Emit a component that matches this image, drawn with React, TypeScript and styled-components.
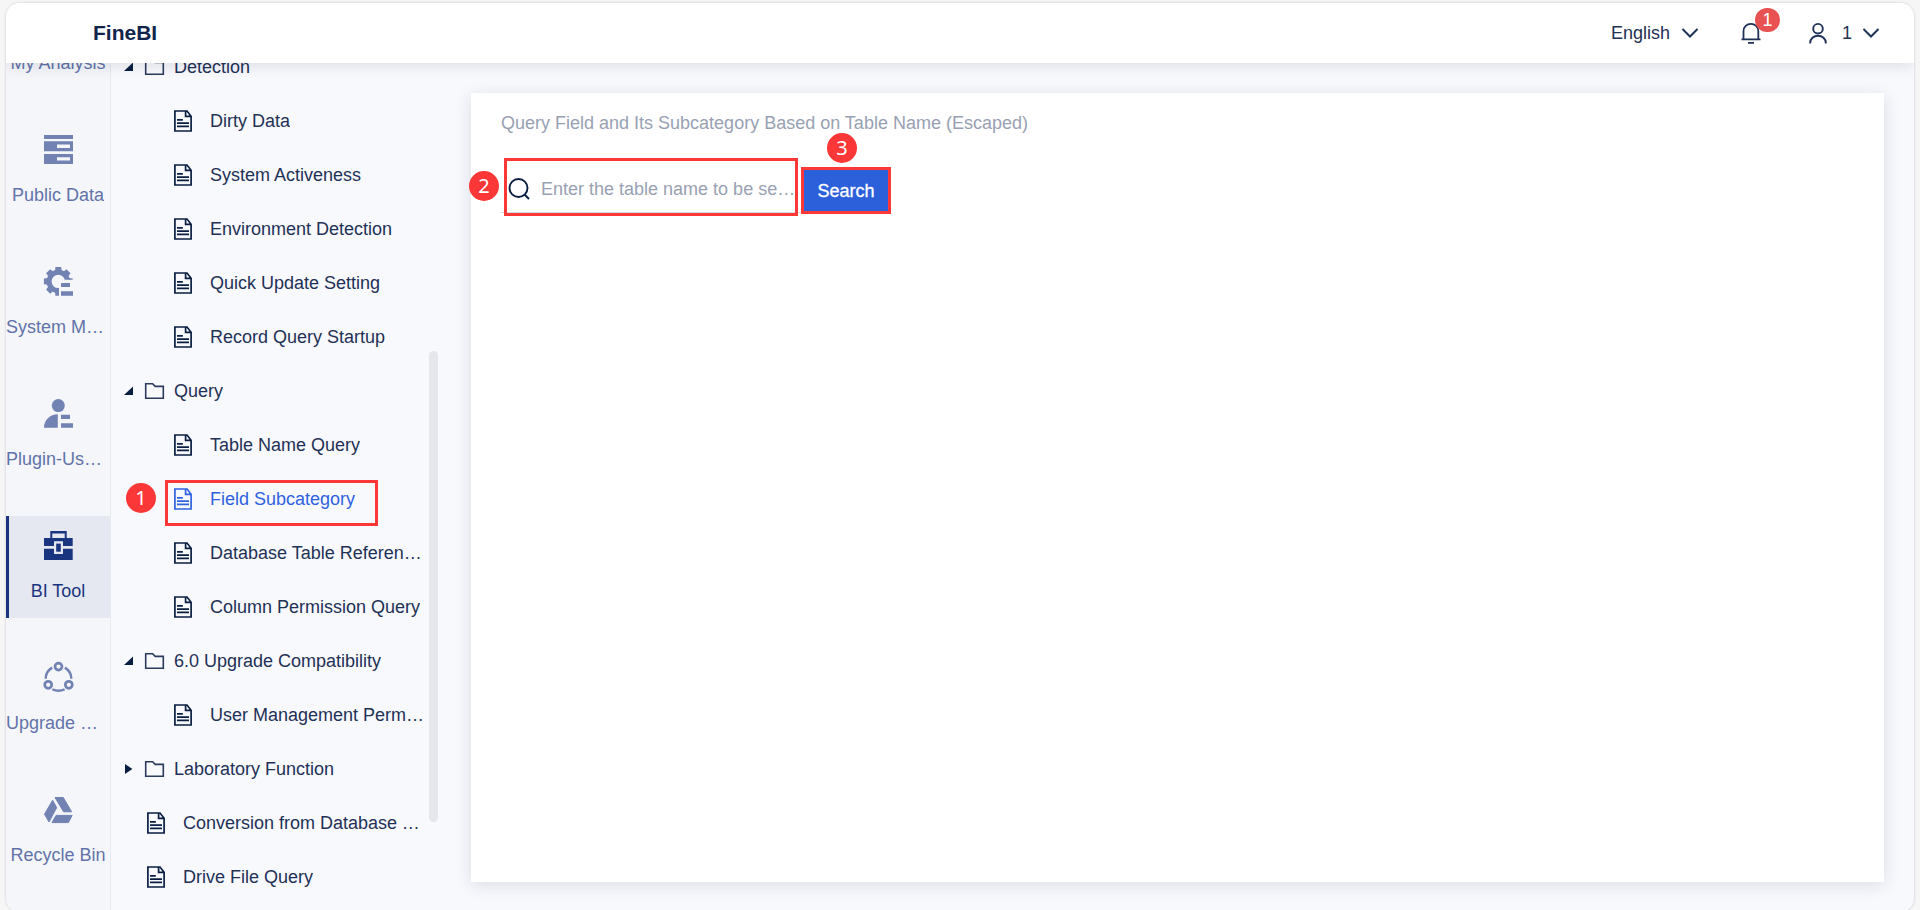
import React from "react";
import styled, { createGlobalStyle } from "styled-components";

const color = {
  page: "#f6f6f6",
  surface: "#ffffff",
  canvas: "#f8f9fd",
  nav: "#f5f6fa",
  navActive: "#e6e8f1",
  line: "#e8eaf1",
  ink: "#0a1e42",
  text: "#1f3156",
  navText: "#6273a9",
  navIcon: "#7283b3",
  brand: "#1a357f",
  link: "#2f62dd",
  button: "#2c60db",
  muted: "#98a1b3",
  mark: "#fc3737",
  badge: "#e85252",
};

const GlobalStyle = createGlobalStyle`
  *, *::before, *::after { box-sizing: border-box; }
  html, body { margin: 0; height: 100%; }
  body {
    background: ${color.page};
    color: ${color.text};
    font: 18px/24px "Liberation Sans", Arial, sans-serif;
    overflow: hidden;
  }
  button, input { font: inherit; color: inherit; }
  ul { list-style: none; margin: 0; padding: 0; }
  svg { display: block; flex: none; overflow: visible; }
`;

const Frame = styled.div`
  display: flex;
  flex-direction: column;
  height: calc(100vh - 1px);
  margin: 3px 6px 0;
  border-radius: 14px;
  background: ${color.canvas};
  box-shadow: 0 0 2px 1px #dfdfe1;
  overflow: hidden;
`;

const Header = styled.header`
  position: relative;
  z-index: 2;
  display: flex;
  flex: none;
  align-items: center;
  justify-content: space-between;
  height: 60px;
  padding: 0 35px 0 87px;
  background: ${color.surface};
  box-shadow: 0 3px 14px rgba(20, 30, 55, 0.12);
`;

const Brand = styled.h1`
  margin: 0;
  font-size: 21px;
  font-weight: bold;
  color: #10244c;
`;

const HeaderActions = styled.div`
  display: flex;
  align-items: center;
  gap: 43px;
`;

const PlainButton = styled.button<{ $gap?: number }>`
  position: relative;
  display: flex;
  align-items: center;
  gap: ${(p) => p.$gap ?? 0}px;
  padding: 0;
  border: 0;
  background: none;
  cursor: pointer;
`;

const AccountButton = styled(PlainButton)`
  padding-left: 5px;
`;

const AccountName = styled.span`
  display: flex;
  align-items: center;
  gap: 11px;
`;

const Badge = styled.span`
  position: absolute;
  top: -15px;
  left: 14px;
  width: 25px;
  height: 24px;
  border-radius: 12px;
  background: ${color.badge};
  color: #fff;
  line-height: 24px;
  text-align: center;
`;

const Body = styled.div`
  display: flex;
  flex: 1;
  min-height: 0;
`;

const Nav = styled.nav`
  flex: none;
  width: 105px;
  background: ${color.nav};
  border-right: 1px solid ${color.line};
  overflow: hidden;
`;

const NavList = styled.ul`
  display: flex;
  flex-direction: column;
  gap: 30px;
  margin-top: -75px;
`;

const NavLink = styled.a<{ $active?: boolean }>`
  display: flex;
  flex-direction: column;
  align-items: center;
  gap: 18px;
  height: 102px;
  padding-top: 15px;
  text-decoration: none;
  color: ${(p) => (p.$active ? color.brand : color.navText)};
  background: ${(p) => (p.$active ? color.navActive : "transparent")};
  box-shadow: ${(p) => (p.$active ? `inset 3px 0 0 ${color.brand}` : "none")};

  svg {
    color: ${(p) => (p.$active ? color.brand : color.navIcon)};
  }
`;

const Label = styled.span`
  max-width: 100%;
  overflow: hidden;
  text-overflow: ellipsis;
  white-space: nowrap;
`;

const Tree = styled.aside`
  position: relative;
  flex: none;
  width: 330px;
  overflow: hidden;
`;

const TreeList = styled.ul`
  margin-top: -23px;
  padding-right: 15px;
`;

const TreeItem = styled.li`
  position: relative;
`;

const GroupRow = styled.button`
  display: flex;
  align-items: center;
  width: 100%;
  height: 54px;
  padding: 0 0 0 13px;
  border: 0;
  background: none;
  text-align: left;
  cursor: pointer;
`;

const FolderSlot = styled.span`
  padding: 0 10px 0 11px;
`;

const LeafLink = styled.a<{ $nested?: boolean; $active?: boolean }>`
  display: flex;
  align-items: center;
  gap: 18px;
  height: 54px;
  padding-left: ${(p) => (p.$nested ? 63 : 36)}px;
  text-decoration: none;
  color: ${(p) => (p.$active ? color.link : color.text)};

  svg {
    color: ${(p) => (p.$active ? color.link : color.ink)};
  }
`;

const ScrollThumb = styled.div`
  position: absolute;
  top: 288px;
  right: 3px;
  width: 9px;
  height: 471px;
  border-radius: 5px;
  background: #e6e7ed;
`;

const Main = styled.main`
  display: flex;
  flex: 1;
  min-width: 0;
  padding: 30px;
`;

const Panel = styled.section`
  flex: 1;
  min-width: 0;
  padding: 18px 30px;
  background: ${color.surface};
  box-shadow: 0 3px 16px rgba(20, 30, 60, 0.13);
`;

const PanelTitle = styled.h2`
  margin: 0 0 30px;
  font-size: 18px;
  font-weight: normal;
  color: ${color.muted};
`;

const SearchForm = styled.form`
  display: flex;
  align-items: flex-start;
`;

const SearchField = styled.label`
  position: relative;
  display: flex;
  align-items: center;
  gap: 11px;
  width: 300px;
  height: 48px;
  padding-left: 7px;
  border-bottom: 1px solid #d5dae3;
  color: ${color.ink};
`;

const SearchInput = styled.input`
  flex: 1;
  min-width: 0;
  padding: 0;
  border: 0;
  outline: 0;
  background: none;
  text-overflow: ellipsis;

  &::placeholder {
    color: ${color.muted};
    opacity: 1;
  }
`;

const SearchButton = styled.button`
  position: relative;
  width: 90px;
  height: 47px;
  margin-top: 2px;
  padding: 0;
  border: 3px solid ${color.mark};
  background: ${color.button};
  color: #fff;
  -webkit-text-stroke: 0.3px #fff;
  cursor: pointer;
`;

const MarkBox = styled.span<{ $x: number; $y: number; $w: number; $h: number }>`
  position: absolute;
  left: ${(p) => p.$x}px;
  top: ${(p) => p.$y}px;
  width: ${(p) => p.$w}px;
  height: ${(p) => p.$h}px;
  border: 3px solid ${color.mark};
  pointer-events: none;
`;

const MarkDot = styled.span<{ $x: number; $y: number }>`
  position: absolute;
  left: ${(p) => p.$x}px;
  top: ${(p) => p.$y}px;
  width: 30px;
  height: 30px;
  border-radius: 50%;
  background: ${color.mark};
  color: #fff;
  font: 20px/30px "Noto Sans", "Open Sans", sans-serif;
  text-align: center;
  -webkit-text-stroke: 0;
  pointer-events: none;
`;

const Chevron = () => (
  <svg width="16" height="10" viewBox="0 0 16 10" fill="none" stroke={color.text} strokeWidth="2">
    <path d="M0.5 1 8 8.5 15.5 1" />
  </svg>
);

const Bell = () => (
  <svg width="20" height="21" viewBox="0 0 20 21" fill="none" stroke={color.text} strokeWidth="1.8">
    <path d="M0.5 16.4H19.5M2.5 16V8.2A7.4 7.4 0 0 1 17.3 8.2V16M7 19.8h6" />
  </svg>
);

const Person = () => (
  <svg width="18" height="21" viewBox="0 0 18 21" fill="none" stroke={color.text} strokeWidth="1.9">
    <circle cx="9" cy="5.7" r="4.8" />
    <path d="M1.2 20.5v-.8a7.8 7 0 0 1 15.6 0v.8" />
  </svg>
);

const Magnifier = () => (
  <svg width="22" height="22" viewBox="0 0 22 22" fill="none" stroke="currentColor" strokeWidth="1.9">
    <circle cx="10.5" cy="10" r="9" />
    <path d="M16.5 16.5 21 21" />
  </svg>
);

const DocIcon = () => (
  <svg width="18" height="22" viewBox="0 0 18 22" fill="none" stroke="currentColor" strokeWidth="1.7">
    <path d="M0.9 1H13L17.1 6.2V21H0.9ZM11.6 1V6.4H17.1" />
    <path d="M3 9.9H8.8M3 13.1H15M3 16.4H15" />
  </svg>
);

const FolderIcon = () => (
  <svg width="19" height="16" viewBox="0 0 19 16" fill="none" stroke="#2b3b5d" strokeWidth="1.6">
    <path d="M0.7 0.7H7.6L10.2 3.4H18.3V15.3H0.7Z" />
  </svg>
);

const Arrow = ({ open }: { open: boolean }) => (
  <svg width="10" height="10" viewBox="0 0 10 10" fill={color.ink}>
    <path d={open ? "M9 0.5V9H0Z" : "M1 0V10L8.4 5Z"} />
  </svg>
);

const NavSvg = ({ children }: { children: React.ReactNode }) => (
  <svg width="30" height="30" viewBox="0 0 30 30" fill="currentColor">
    {children}
  </svg>
);

const PublicDataIcon = () => (
  <NavSvg>
    <path
      fillRule="evenodd"
      d="M1 0H30V4H1ZM1 6.3H30V16.3H1ZM14 9.5V13H27V9.5ZM1 19H30V29H1ZM14 22.2V25.6H27V22.2Z"
    />
  </NavSvg>
);

const SystemIcon = () => (
  <NavSvg>
    <clipPath id="gear-cut">
      <path d="M0-1H30V12.8H22L20.5 14H16V30H0Z" />
    </clipPath>
    <g clipPath="url(#gear-cut)">
      <circle cx="15.3" cy="14.4" r="9.2" fill="none" stroke="currentColor" strokeWidth="5" />
      {[0, 45, 90, 135, 180, 225, 270, 315].map((a) => (
        <path key={a} d="M12 4 12.4 0H18.2L18.6 4Z" transform={`rotate(${a} 15.3 14.4)`} />
      ))}
    </g>
    <path d="M18 16H27V20H18ZM18 24.2H30V28.7H18Z" />
  </NavSvg>
);

const PluginIcon = () => (
  <NavSvg>
    <circle cx="15.3" cy="6.6" r="6.5" />
    <path d="M14.8 15.2V28.8H1C1 21 7 15.2 14.8 15.2ZM18 15.8H27V20H18ZM18 24.2H30V28.7H18Z" />
  </NavSvg>
);

const ToolIcon = () => (
  <NavSvg>
    <path d="M7.3 0H23.7V7H29.7V15H20V10.3H11V15H1V7H7.3ZM9.3 2.4V7H21.7V2.4Z" fillRule="evenodd" />
    <path d="M1 17.8H11V23H20V17.8H29.7V29H1Z" />
    <path d="M13.2 12.6H17.8V20.7H13.2Z" />
  </NavSvg>
);

const UpgradeIcon = () => (
  <NavSvg>
    <g fill="none" stroke="currentColor" strokeWidth="2.7">
      <circle cx="15.5" cy="3.6" r="3.5" />
      <circle cx="5.2" cy="21.8" r="3.5" />
      <circle cx="25.8" cy="21.8" r="3.5" />
      <path
        strokeWidth="2.4"
        d="M9.2 4.6A13 13 0 0 0 2.7 15.8M21.8 4.6A13 13 0 0 1 28.3 15.8M9.4 26.4Q15.5 29 21.6 26.4"
      />
    </g>
  </NavSvg>
);

const RecycleIcon = () => (
  <NavSvg>
    <g stroke="currentColor" strokeWidth="1" strokeLinejoin="round">
      <path d="M12 2.5H20.3L28.6 16.8H20.6Z" />
      <path d="M9.6 5.2 13.7 12.6 6 27 1.5 19.2Z" />
      <path d="M13 20.4H29.2L25.4 27.6H9Z" />
    </g>
  </NavSvg>
);

const navItems = [
  { label: "My Analysis", icon: <PublicDataIcon /> },
  { label: "Public Data", icon: <PublicDataIcon /> },
  { label: "System Management", icon: <SystemIcon /> },
  { label: "Plugin-Usage", icon: <PluginIcon /> },
  { label: "BI Tool", icon: <ToolIcon />, active: true },
  { label: "Upgrade Management", icon: <UpgradeIcon /> },
  { label: "Recycle Bin", icon: <RecycleIcon /> },
];

type Node = { label: string; open?: boolean; children?: string[] };

const tree: Node[] = [
  {
    label: "Detection",
    open: true,
    children: [
      "Dirty Data",
      "System Activeness",
      "Environment Detection",
      "Quick Update Setting",
      "Record Query Startup",
    ],
  },
  {
    label: "Query",
    open: true,
    children: [
      "Table Name Query",
      "Field Subcategory",
      "Database Table Reference Query",
      "Column Permission Query",
    ],
  },
  {
    label: "6.0 Upgrade Compatibility",
    open: true,
    children: ["User Management Permission"],
  },
  { label: "Laboratory Function", open: false, children: [] },
  { label: "Conversion from Database Table" },
  { label: "Drive File Query" },
];

const selected = "Field Subcategory";

const Leaf = ({ label, nested }: { label: string; nested?: boolean }) => (
  <TreeItem>
    <LeafLink href="#" $nested={nested} $active={label === selected}>
      <DocIcon />
      <Label>{label}</Label>
    </LeafLink>
    {label === selected && (
      <>
        <MarkBox $x={54} $y={8} $w={213} $h={46} />
        <MarkDot $x={15} $y={11}>1</MarkDot>
      </>
    )}
  </TreeItem>
);

const Group = ({ node }: { node: Node }) => (
  <TreeItem>
    <GroupRow type="button" aria-expanded={node.open}>
      <Arrow open={!!node.open} />
      <FolderSlot>
        <FolderIcon />
      </FolderSlot>
      <Label>{node.label}</Label>
    </GroupRow>
    {node.open && (
      <ul>
        {node.children!.map((c) => (
          <Leaf key={c} label={c} nested />
        ))}
      </ul>
    )}
  </TreeItem>
);

export default function App() {
  return (
    <>
      <GlobalStyle />
      <Frame>
        <Header>
          <Brand>FineBI</Brand>
          <HeaderActions>
            <PlainButton type="button" $gap={12}>
              English
              <Chevron />
            </PlainButton>
            <PlainButton type="button" aria-label="Notifications">
              <Bell />
              <Badge>1</Badge>
            </PlainButton>
            <AccountButton type="button" $gap={15}>
              <Person />
              <AccountName>
                1
                <Chevron />
              </AccountName>
            </AccountButton>
          </HeaderActions>
        </Header>
        <Body>
          <Nav>
            <NavList>
              {navItems.map((item) => (
                <li key={item.label}>
                  <NavLink href="#" $active={item.active}>
                    {item.icon}
                    <Label>{item.label}</Label>
                  </NavLink>
                </li>
              ))}
            </NavList>
          </Nav>
          <Tree>
            <TreeList>
              {tree.map((node) =>
                node.children ? (
                  <Group key={node.label} node={node} />
                ) : (
                  <Leaf key={node.label} label={node.label} />
                )
              )}
            </TreeList>
            <ScrollThumb />
          </Tree>
          <Main>
            <Panel>
              <PanelTitle>Query Field and Its Subcategory Based on Table Name (Escaped)</PanelTitle>
              <SearchForm onSubmit={(e) => e.preventDefault()}>
                <SearchField>
                  <Magnifier />
                  <SearchInput
                    type="text"
                    aria-label="Table name"
                    placeholder="Enter the table name to be searched"
                  />
                  <MarkBox $x={3} $y={-7} $w={294} $h={58} />
                  <MarkDot $x={-32} $y={6}>2</MarkDot>
                </SearchField>
                <SearchButton type="submit">
                  Search
                  <MarkDot $x={23} $y={-37}>3</MarkDot>
                </SearchButton>
              </SearchForm>
            </Panel>
          </Main>
        </Body>
      </Frame>
    </>
  );
}
